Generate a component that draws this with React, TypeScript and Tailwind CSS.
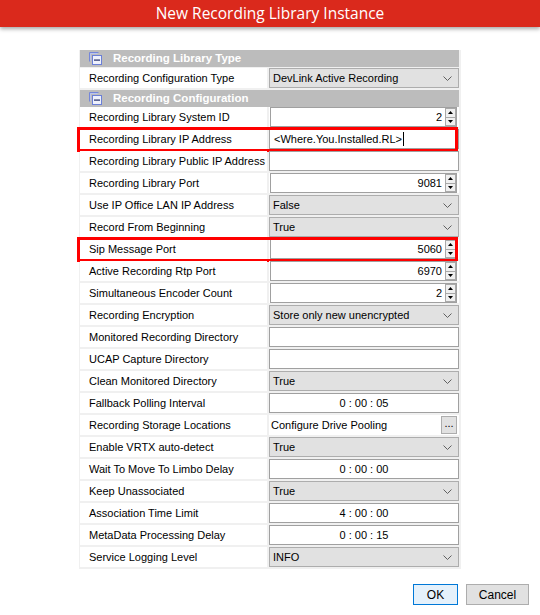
import React from "react";

type Row =
  | { label: string; kind: "dropdown"; value: string; hl?: boolean }
  | { label: string; kind: "number"; value: string; hl?: boolean }
  | { label: string; kind: "text"; value: string; cursor?: boolean; hl?: boolean }
  | { label: string; kind: "time"; value: string; hl?: boolean }
  | { label: string; kind: "button"; value: string; hl?: boolean };

const rows2: Row[] = [
  { label: "Recording Library System ID", kind: "number", value: "2" },
  { label: "Recording Library IP Address", kind: "text", value: "<Where.You.Installed.RL>", cursor: true, hl: true },
  { label: "Recording Library Public IP Address", kind: "text", value: "" },
  { label: "Recording Library Port", kind: "number", value: "9081" },
  { label: "Use IP Office LAN IP Address", kind: "dropdown", value: "False" },
  { label: "Record From Beginning", kind: "dropdown", value: "True" },
  { label: "Sip Message Port", kind: "number", value: "5060", hl: true },
  { label: "Active Recording Rtp Port", kind: "number", value: "6970" },
  { label: "Simultaneous Encoder Count", kind: "number", value: "2" },
  { label: "Recording Encryption", kind: "dropdown", value: "Store only new unencrypted" },
  { label: "Monitored Recording Directory", kind: "text", value: "" },
  { label: "UCAP Capture Directory", kind: "text", value: "" },
  { label: "Clean Monitored Directory", kind: "dropdown", value: "True" },
  { label: "Fallback Polling Interval", kind: "time", value: "0 : 00 : 05" },
  { label: "Recording Storage Locations", kind: "button", value: "Configure Drive Pooling" },
  { label: "Enable VRTX auto-detect", kind: "dropdown", value: "True" },
  { label: "Wait To Move To Limbo Delay", kind: "time", value: "0 : 00 : 00" },
  { label: "Keep Unassociated", kind: "dropdown", value: "True" },
  { label: "Association Time Limit", kind: "time", value: "4 : 00 : 00" },
  { label: "MetaData Processing Delay", kind: "time", value: "0 : 00 : 15" },
  { label: "Service Logging Level", kind: "dropdown", value: "INFO" },
];

function Chevron() {
  return (
    <svg width="9" height="5" viewBox="0 0 9 5" className="shrink-0">
      <polyline points="0.5,0.5 4.5,4.5 8.5,0.5" fill="none" stroke="#606060" strokeWidth="1" />
    </svg>
  );
}

function SectionIcon() {
  return (
    <svg width="13" height="13" viewBox="0 0 13 13" className="shrink-0">
      <path d="M0.5 9.5 V0.5 H9.5" fill="none" stroke="#7486d9" strokeWidth="1" />
      <path d="M1.5 8.5 V1.5 H8.5" fill="none" stroke="#b9c3ee" strokeWidth="1" />
      <rect x="3.5" y="3.5" width="9" height="9" fill="#eef1fc" stroke="#6b7fd7" strokeWidth="1" />
      <rect x="5" y="7.5" width="6" height="1.2" fill="#1f2a66" />
    </svg>
  );
}

function Spinner() {
  return (
    <div className="flex w-[11px] shrink-0 flex-col border border-[#a9a9a9] bg-[#f0f0f0]">
      <div className="flex flex-1 items-center justify-center border-b border-[#a9a9a9]">
        <svg width="5" height="3" viewBox="0 0 5 3">
          <polygon points="2.5,0 5,3 0,3" fill="#000" />
        </svg>
      </div>
      <div className="flex flex-1 items-center justify-center">
        <svg width="5" height="3" viewBox="0 0 5 3">
          <polygon points="0,0 5,0 2.5,3" fill="#000" />
        </svg>
      </div>
    </div>
  );
}

function Value({ row }: { row: Row }) {
  switch (row.kind) {
    case "dropdown":
      return (
        <div className="flex h-full w-full items-center justify-between border border-[#adadad] bg-[#e1e1e1] pl-[3px] pr-[6px]">
          <span>{row.value}</span>
          <Chevron />
        </div>
      );
    case "number":
      return (
        <div className="flex h-full w-full bg-white pl-[1px] pr-[2px]">
          <div className="flex h-full flex-1 items-stretch border border-[#a0a0a0] bg-white">
            <div className="flex flex-1 items-center justify-end pr-[3px]">{row.value}</div>
            <Spinner />
          </div>
        </div>
      );
    case "text":
      return (
        <div className="flex h-full w-full items-center border border-[#a0a0a0] bg-white pl-[4px]">
          <span>{row.value}</span>
          {row.cursor ? <span className="ml-[1px] inline-block h-[14px] w-[1px] bg-black" /> : null}
        </div>
      );
    case "time":
      return (
        <div className="flex h-full w-full items-center justify-center border border-[#a0a0a0] bg-white">
          <span>{row.value}</span>
        </div>
      );
    case "button":
      return (
        <div className="flex h-full w-full items-center justify-between bg-white pl-[2px] pr-[2px]">
          <span>{row.value}</span>
          <div className="flex h-[18px] w-[16px] items-center justify-center border border-[#adadad] bg-[#e1e1e1] pb-[4px] leading-none">
            ...
          </div>
        </div>
      );
  }
}

function PropRow({ row }: { row: Row }) {
  return (
    <div className="relative flex h-[22px] gap-[2px] pb-[2px]">
      <div className="flex w-[187px] items-center bg-white pl-[9px]">{row.label}</div>
      <div className="flex w-[190px] items-stretch">
        <Value row={row} />
      </div>
      {row.hl ? (
        <div className="pointer-events-none absolute -bottom-[1px] -left-[3px] -top-[2px] right-[1px] border-[3px] border-[#ff0000]" />
      ) : null}
    </div>
  );
}

function SectionHeader({ title }: { title: string }) {
  return (
    <div className="flex h-[17px] items-center gap-[11px] bg-[#bcbcbc] pl-[9px] text-[11.5px] font-bold text-white">
      <SectionIcon />
      <span>{title}</span>
    </div>
  );
}

export default function App() {
  return (
    <div
      className="h-[615px] w-[540px] bg-white text-[11px] text-black"
      style={{ fontFamily: '"Liberation Sans", Arial, sans-serif' }}
    >
      <div
        className="flex h-[27px] items-center justify-center bg-[#da291c] text-[15.5px] text-white shadow-[0_2px_4px_rgba(0,0,0,0.35)]"
        style={{ fontFamily: '"Open Sans", "Noto Sans", sans-serif' }}
      >
        New Recording Library Instance
      </div>
      <div className="mx-auto mt-[23px] w-[382px] bg-[#f0f0f0] pl-[1px] pr-[2px]">
        <SectionHeader title="Recording Library Type" />
        <div className="h-[1px]" />
        <PropRow row={{ label: "Recording Configuration Type", kind: "dropdown", value: "DevLink Active Recording" }} />
        <SectionHeader title="Recording Configuration" />
        {rows2.map((r) => (
          <PropRow key={r.label} row={r} />
        ))}
      </div>
      <div className="mt-[15px] flex justify-end gap-[8px] pr-[11px] text-[12px]">
        <button className="flex h-[21px] w-[45px] items-center justify-center border border-[#0078d7] bg-[#e5f1fb]">
          OK
        </button>
        <button className="flex h-[21px] w-[63px] items-center justify-center border border-[#adadad] bg-[#e1e1e1]">
          Cancel
        </button>
      </div>
    </div>
  );
}
